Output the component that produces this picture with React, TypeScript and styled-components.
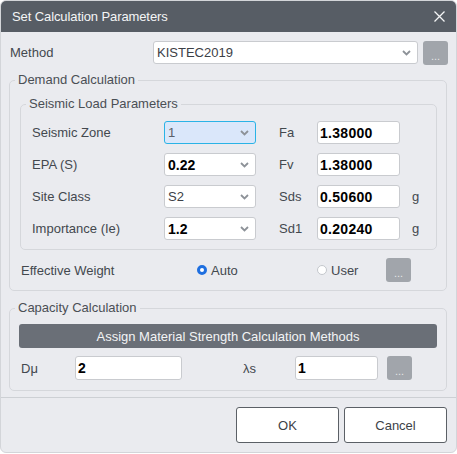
import React from 'react';
import styled, { createGlobalStyle } from 'styled-components';

const Global = createGlobalStyle`
  html, body { margin: 0; padding: 0; background: #ffffff; }
  body { font-family: "Liberation Sans", Arial, sans-serif; }
`;

const Window = styled.div`
  width: 457px;
  height: 453px;
  box-sizing: border-box;
  background: #eaebef;
  border: 1px solid #d3d5d9;
  border-radius: 6px;
  overflow: hidden;
  display: flex;
  flex-direction: column;
`;

const TitleBar = styled.div`
  height: 31px;
  flex: none;
  background: #575d65;
  color: #f4f5f6;
  display: flex;
  align-items: center;
  justify-content: space-between;
  padding: 0 10px 0 11px;
  font-size: 13px;
  letter-spacing: -0.1px;
`;

const CloseButton = styled.div`
  width: 14px;
  height: 14px;
  display: flex;
  align-items: center;
  justify-content: center;
`;

const Content = styled.div`
  padding: 9px 9px 0 8px;
  display: flex;
  flex-direction: column;
`;

const Row = styled.div`
  display: flex;
  align-items: center;
  height: 23px;
`;

const Label = styled.span<{ $w?: number; $pl?: number }>`
  font-size: 13px;
  color: #43484e;
  width: ${p => (p.$w ? `${p.$w}px` : 'auto')};
  padding-left: ${p => p.$pl ?? 0}px;
  flex: none;
  box-sizing: border-box;
  white-space: nowrap;
`;

const SelectBox = styled.div<{ $w: number; $focus?: boolean; $bold?: boolean }>`
  width: ${p => p.$w}px;
  height: 23px;
  box-sizing: border-box;
  flex: none;
  border: 1px solid ${p => (p.$focus ? '#2ab3e6' : '#c9cbcf')};
  background: ${p => (p.$focus ? '#dae7fa' : '#ffffff')};
  border-radius: 3px;
  display: flex;
  align-items: center;
  justify-content: space-between;
  padding: 0 6px 0 3px;
  font-size: ${p => (p.$bold ? '14px' : '13px')};
  font-weight: ${p => (p.$bold ? 700 : 400)};
  color: ${p => (p.$bold ? '#000' : p.$focus ? '#5a6068' : '#3c4046')};
`;

const Input = styled.div<{ $w: number; $h?: number }>`
  width: ${p => p.$w}px;
  height: ${p => p.$h ?? 23}px;
  box-sizing: border-box;
  flex: none;
  border: 1px solid #c9cbcf;
  background: #ffffff;
  border-radius: 3px;
  display: flex;
  align-items: center;
  padding-left: 2px;
  font-size: 14px;
  font-weight: 700;
  color: #000;
  letter-spacing: 0.3px;
`;

const DotsButton = styled.div`
  width: 25px;
  height: 24px;
  box-sizing: border-box;
  flex: none;
  background: #a1a5ab;
  border-radius: 3px;
  color: #e4e6e9;
  font-size: 11px;
  display: flex;
  align-items: flex-end;
  justify-content: center;
  padding-bottom: 5px;
  line-height: 8px;
`;

const Group = styled.fieldset<{ $pt: number; $pb: number; $pl?: number }>`
  margin: 0;
  border: 1px solid #d5d7db;
  border-radius: 5px;
  padding: ${p => p.$pt}px 9px ${p => p.$pb}px ${p => p.$pl ?? 10}px;
  min-width: 0;
`;

const Legend = styled.legend<{ $ml?: number }>`
  font-size: 13px;
  color: #4a4f55;
  padding: 0 3px;
  margin-left: ${p => p.$ml ?? -5}px;
  line-height: 16px;
`;

const ParamGrid = styled.div`
  display: grid;
  grid-template-columns: 133px 92px 61px 83px 1fr;
  grid-auto-rows: 23px;
  row-gap: 9px;
  align-items: center;
`;

const Unit = styled.span`
  font-size: 13px;
  color: #43484e;
  padding-left: 12px;
`;

const Radio = styled.span<{ $on?: boolean }>`
  width: 10px;
  height: 10px;
  border-radius: 50%;
  box-sizing: border-box;
  background: #fff;
  border: ${p => (p.$on ? '3px solid #1f6fe0' : '1px solid #c4c7cc')};
  margin-right: 4px;
  flex: none;
`;

const RadioItem = styled.div<{ $w: number }>`
  display: flex;
  align-items: center;
  width: ${p => p.$w}px;
  flex: none;
  font-size: 13px;
  color: #43484e;
`;

const BarButton = styled.div`
  height: 24px;
  background: #6a6f77;
  border-radius: 3px;
  color: #f3f4f5;
  font-size: 13px;
  display: flex;
  align-items: center;
  justify-content: center;
`;

const Separator = styled.div`
  height: 1px;
  background: #cdd0d4;
  margin-top: 6px;
`;

const Footer = styled.div`
  display: flex;
  justify-content: flex-end;
  gap: 5px;
  padding: 9px 9px 0 0;
`;

const DialogButton = styled.div`
  width: 103px;
  height: 36px;
  box-sizing: border-box;
  background: #ffffff;
  border: 1px solid #5b6066;
  border-radius: 3px;
  display: flex;
  align-items: center;
  justify-content: center;
  font-size: 13px;
  color: #3d4247;
`;

const Spacer = styled.div<{ $w: number }>`
  width: ${p => p.$w}px;
  flex: none;
`;

const Chevron = () => (
  <svg width="9" height="6" viewBox="0 0 9 6">
    <path d="M1 1 L4.5 4.5 L8 1" fill="none" stroke="#8d9298" strokeWidth="1.8" />
  </svg>
);

const params = [
  { label: 'Seismic Zone', sel: '1', focus: true, bold: false, sub: 'Fa', val: '1.38000', unit: '' },
  { label: 'EPA (S)', sel: '0.22', bold: true, sub: 'Fv', val: '1.38000', unit: '' },
  { label: 'Site Class', sel: 'S2', bold: false, sub: 'Sds', val: '0.50600', unit: 'g' },
  { label: 'Importance (Ie)', sel: '1.2', bold: true, sub: 'Sd1', val: '0.20240', unit: 'g' },
];

export default function App() {
  return (
    <>
      <Global />
      <Window>
        <TitleBar>
          <span>Set Calculation Parameters</span>
          <CloseButton>
            <svg width="11" height="11" viewBox="0 0 11 11">
              <path d="M0.5 0.5 L10.5 10.5 M10.5 0.5 L0.5 10.5" stroke="#f4f5f6" strokeWidth="1.3" />
            </svg>
          </CloseButton>
        </TitleBar>
        <Content>
          <Row>
            <Label $w={144} $pl={1}>Method</Label>
            <SelectBox $w={265}>
              <span>KISTEC2019</span>
              <Chevron />
            </SelectBox>
            <Spacer $w={5} />
            <DotsButton>...</DotsButton>
          </Row>

          <Group $pt={8} $pb={8} style={{ marginTop: 8 }}>
            <Legend>Demand Calculation</Legend>
            <Group $pt={9} $pb={9}>
              <Legend>Seismic Load Parameters</Legend>
              <ParamGrid>
                {params.map(p => (
                  <React.Fragment key={p.label}>
                    <Label $pl={1}>{p.label}</Label>
                    <SelectBox $w={92} $focus={p.focus} $bold={p.bold}>
                      <span>{p.sel}</span>
                      <Chevron />
                    </SelectBox>
                    <Label $pl={23}>{p.sub}</Label>
                    <Input $w={83}>{p.val}</Input>
                    <Unit>{p.unit}</Unit>
                  </React.Fragment>
                ))}
              </ParamGrid>
            </Group>
            <Row style={{ marginTop: 8, height: 24 }}>
              <Label $w={177} $pl={1}>Effective Weight</Label>
              <RadioItem $w={120}>
                <Radio $on />
                Auto
              </RadioItem>
              <RadioItem $w={69}>
                <Radio />
                User
              </RadioItem>
              <DotsButton>...</DotsButton>
            </Row>
          </Group>

          <Group $pt={8} $pb={10} $pl={9} style={{ marginTop: 9 }}>
            <Legend $ml={-4}>Capacity Calculation</Legend>
            <BarButton>Assign Material Strength Calculation Methods</BarButton>
            <Row style={{ marginTop: 8, height: 24 }}>
              <Label $w={56} $pl={2}>Dμ</Label>
              <Input $w={107} $h={24}>2</Input>
              <Label $w={113} $pl={61}>λs</Label>
              <Input $w={83} $h={24}>1</Input>
              <Spacer $w={9} />
              <DotsButton>...</DotsButton>
            </Row>
          </Group>
        </Content>
        <Separator />
        <Footer>
          <DialogButton>OK</DialogButton>
          <DialogButton>Cancel</DialogButton>
        </Footer>
      </Window>
    </>
  );
}
